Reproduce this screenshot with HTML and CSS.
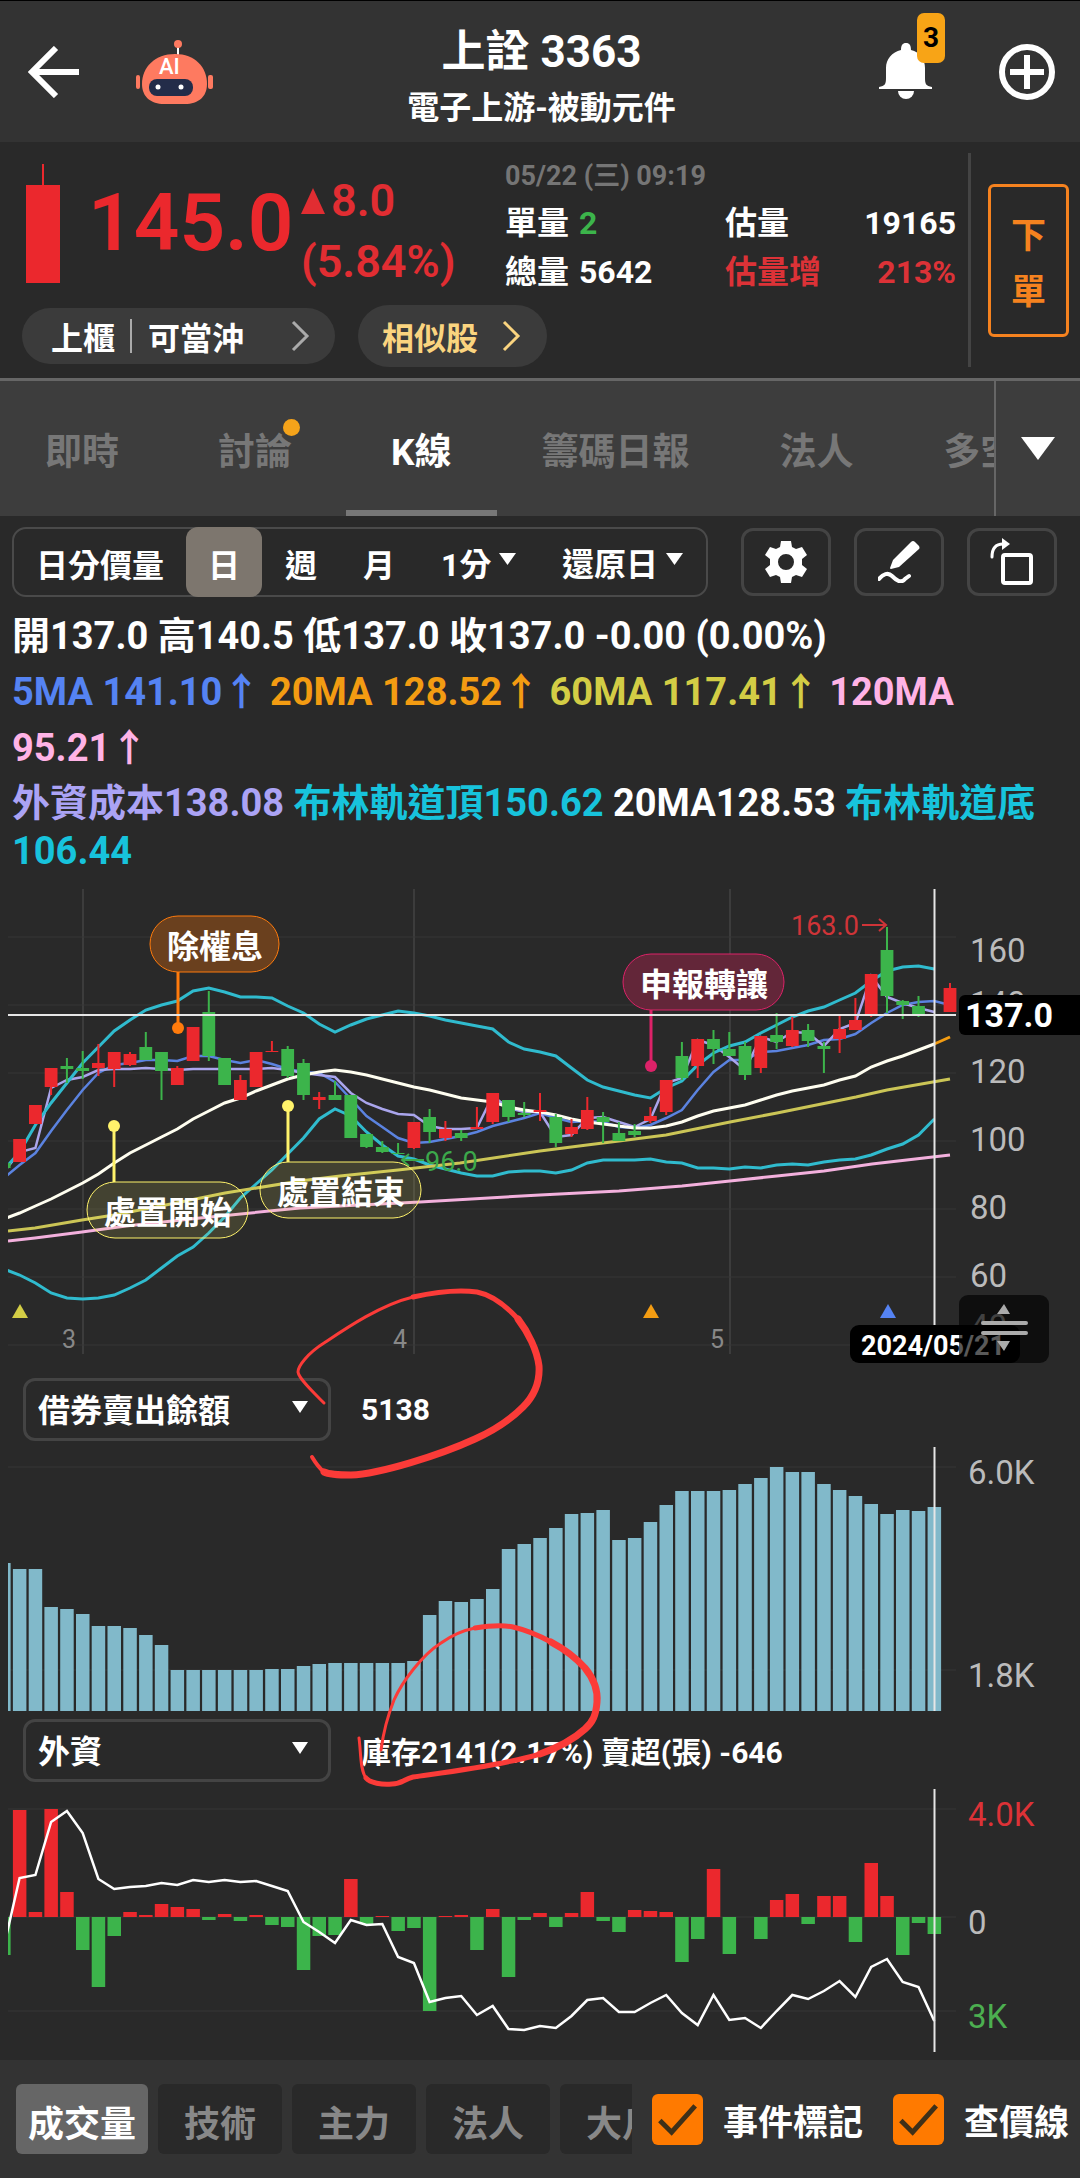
FILE: index.html
```html
<!DOCTYPE html>
<html lang="zh-Hant">
<head>
    <meta charset="utf-8">
    <title>上詮 3363</title>
    <meta name="viewport" content="width=device-width, initial-scale=1.0">
    <link rel="stylesheet" href="styles.css">
</head>
<body>
    <header class="topbar">
        <div class="topbar-left">
            <button class="icon-btn" aria-label="返回">
                <svg width="52" height="52" viewBox="0 0 52 52"><path d="M28 2 4 26l24 24M4 26h47" fill="none" stroke="#fff" stroke-width="6"/></svg>
            </button>
            <button class="icon-btn" aria-label="AI">
                <svg width="78" height="64" viewBox="0 0 78 64">
                    <path d="M42 6v10" stroke="#fff" stroke-width="2"/>
                    <circle cx="42" cy="4" r="4" fill="#fe7a60"/>
                    <rect x="0" y="35" width="4" height="14" rx="2" fill="#fe7a60"/>
                    <rect x="72" y="35" width="5" height="14" rx="2" fill="#fe7a60"/>
                    <path d="M39 14c20 0 32 13 32 30 0 13-9 20-22 20H28C15 64 6 57 6 44 6 27 19 14 39 14z" fill="#fe7a60"/>
                    <rect x="13" y="39" width="44" height="17" rx="8" fill="#232c49"/>
                    <circle cx="22" cy="47" r="2.5" fill="#fff"/>
                    <circle cx="45" cy="47" r="2.5" fill="#fff"/>
                    <text class="robot-text" x="23" y="34">AI</text>
                </svg>
            </button>
        </div>
        <div class="topbar-title">
            <h1>上詮 3363</h1>
            <p>電子上游-被動元件</p>
        </div>
        <div class="topbar-right">
            <button class="icon-btn bell" aria-label="通知">
                <svg width="54" height="58" viewBox="0 0 54 58">
                    <path d="M27 0c3.500 0 5 2.500 5 7 9 2 14 9 14 18v10c0 6 1 8 7 9v2H0v-2c6-1 7-3 7-9V25C7 16 13 9 22 7c0-4.500 1.500-7 5-7z" fill="#fff"/>
                    <path d="M19 48h16a8 8 0 0 1-16 0z" fill="#fff"/>
                </svg>
                <span class="badge">3</span>
            </button>
            <button class="icon-btn" aria-label="加入">
                <svg width="56" height="56" viewBox="0 0 56 56"><circle cx="28" cy="28" r="25" fill="none" stroke="#fff" stroke-width="6"/><path d="M28 11v34M11 28h34" stroke="#fff" stroke-width="6"/></svg>
            </button>
        </div>
    </header>

    <section class="quote">
        <div class="quote-main">
            <div class="quote-row">
                <svg class="quote-candle" width="34" height="120" viewBox="0 0 34 120"><path d="M17 0v22" stroke="#eb282d" stroke-width="2"/><path d="M0 21h34v98H0z" fill="#eb282d"/></svg>
                <div class="price">145.0</div>
                <div class="change">
                    <div><svg width="24" height="26" viewBox="0 0 24 26"><path d="M12 0l12 26H0z" fill="#e12d32"/></svg>8.0</div>
                    <div>(5.84%)</div>
                </div>
                <div class="stats">
                    <time>05/22 (三) 09:19</time>
                    <span>單量</span><span class="green">2</span><span>估量</span><span class="num">19165</span>
                    <span>總量</span><span>5642</span><span class="red">估量增</span><span class="num red">213%</span>
                </div>
            </div>
            <div class="chips">
                <button class="chip chip-market"><span>上櫃</span><i></i><span>可當沖</span><svg width="20" height="32" viewBox="0 0 20 32"><path d="M3 2l14 14L3 30" fill="none" stroke="#aaa" stroke-width="3"/></svg></button>
                <button class="chip chip-similar"><span>相似股</span><svg width="20" height="32" viewBox="0 0 20 32"><path d="M3 2l14 14L3 30" fill="none" stroke="#fad47f" stroke-width="3"/></svg></button>
            </div>
        </div>
        <div class="quote-order">
            <button class="order"><span>下</span><span>單</span></button>
        </div>
    </section>

    <nav class="tabs">
        <div class="tabs-list">
            <a href="#">即時</a>
            <a href="#" class="has-dot"><span>討論</span></a>
            <a href="#" class="active">K線</a>
            <a href="#">籌碼日報</a>
            <a href="#">法人</a>
            <a href="#">多空</a>
        </div>
        <button class="tabs-more" aria-label="更多"><svg width="34" height="23" viewBox="0 0 34 23"><path d="M0 0h34L17 23z" fill="#fff"/></svg></button>
    </nav>

    <div class="toolbar">
        <div class="periods">
            <button>日分價量</button>
            <button class="active">日</button>
            <button>週</button>
            <button>月</button>
            <label class="pick"><select aria-label="分鐘"><option>1分</option></select><svg width="17" height="12" viewBox="0 0 17 12"><path d="M0 0h17L8.500 12z" fill="#fff"/></svg></label>
            <label class="pick"><select aria-label="還原"><option>還原日</option></select><svg width="17" height="12" viewBox="0 0 17 12"><path d="M0 0h17L8.500 12z" fill="#fff"/></svg></label>
        </div>
        <div class="tools">
            <button aria-label="設定">
                <svg width="42" height="42" viewBox="0 0 42 42"><path fill="#fff" fill-rule="evenodd" d="M16 0h10l1 6 4 2 6-2 5 8-5 4v6l5 4-5 8-6-2-4 2-1 6H16l-1-6-4-2-6 2-5-8 5-4v-6l-5-4 5-8 6 2 4-2zM21 13a8 8 0 1 0 0 16 8 8 0 0 0 0-16z"/></svg>
            </button>
            <button aria-label="畫線">
                <svg width="42" height="42" viewBox="0 0 42 42"><path d="M33 1q2-2 4 0l4 4q1 2 0 3L21 26l-8 2q-1 0-1-1l3-8z" fill="#fff"/><path d="M1 38c4-5 9-7 13-3s9 8 13 3l4-3" fill="none" stroke="#fff" stroke-width="4" stroke-linecap="round"/></svg>
            </button>
            <button aria-label="旋轉">
                <svg width="44" height="48" viewBox="0 0 44 48"><rect x="13" y="17" width="28" height="28" rx="2" fill="none" stroke="#fff" stroke-width="4"/><path d="M2 19C2 10 6 6 13 6" fill="none" stroke="#fff" stroke-width="3" stroke-linecap="round"/><path d="M12 0l8 6-8 6z" fill="#fff"/></svg>
            </button>
        </div>
    </div>

    <section class="info">
        <p>開137.0 高140.5 低137.0 收137.0 -0.00 (0.00%)</p>
        <p><span class="ma5">5MA 141.10↑</span> <span class="ma20">20MA 128.52↑</span> <span class="ma60">60MA 117.41↑</span> <span class="ma120">120MA 95.21↑</span></p>
        <p class="bands"><span class="cost">外資成本138.08</span> <span class="band">布林軌道頂150.62</span> 20MA128.53 <span class="band">布林軌道底106.44</span></p>
    </section>

    <section class="charts">
        <svg class="chart" viewBox="0 5 1080 499">
            <clipPath id="plot"><rect x="8" y="0" width="949" height="504"/></clipPath>
            <path class="grid-v" d="M83 19v465M414 19v465M730 19v465"/>
            <path class="grid" d="M8 67h948M8 135h948M8 203h948M8 271h948M8 339h948M8 407h948M8 475h948"/>
            <g class="axis">
                <text x="970" y="92">160</text>
                <text x="970" y="145">140</text>
                <text x="970" y="213">120</text>
                <text x="970" y="281">100</text>
                <text x="970" y="349">80</text>
                <text x="970" y="417">60</text>
                <text x="970" y="468">40</text>
            </g>
            <g id="price" clip-path="url(#plot)"></g>
            <g class="months">
                <text x="62" y="478">3</text>
                <text x="393" y="478">4</text>
                <text x="710" y="478">5</text>
            </g>
            <path d="M12 448l8-14 8 14z" fill="#d3cd45"/>
            <path d="M643 448l8-14 8 14z" fill="#f39c12"/>
            <path d="M880 448l8-14 8 14z" fill="#5583f3"/>
            <text class="extreme" x="791" y="65" fill="#cf3438">163.0</text>
            <path d="M862 55h23M879 49l7 6-7 6" fill="none" stroke="#cf3438" stroke-width="2"/>
            <text class="extreme" x="425" y="301" fill="#3ca84b">96.0</text>
            <path d="M424 290h-22M409 284l-7 6 7 6" fill="none" stroke="#3ca84b" stroke-width="2"/>

            <g class="event ex">
                <path d="M178 102v55"/><circle cx="178" cy="158" r="6"/>
                <rect x="150" y="46" width="129" height="56" rx="28"/>
                <text x="167" y="88">除權息</text>
            </g>
            <g class="event hold">
                <path d="M114 256v56"/><circle cx="114" cy="256" r="6"/>
                <rect x="87" y="312" width="161" height="56" rx="28"/>
                <text x="104" y="354">處置開始</text>
            </g>
            <g class="event hold">
                <path d="M288 236v56"/><circle cx="288" cy="236" r="6"/>
                <rect x="260" y="292" width="161" height="56" rx="28"/>
                <text x="277" y="334">處置結束</text>
            </g>
            <g class="event transfer">
                <path d="M651 140v56"/><circle cx="651" cy="196" r="6"/>
                <rect x="623" y="84" width="161" height="56" rx="28"/>
                <text x="640" y="126">申報轉讓</text>
            </g>

            <path class="cross" d="M934.500 19v437M8 145h948"/>
            <rect x="959" y="125" width="130" height="40" rx="6"/>
            <text class="tag" x="965" y="157">137.0</text>
            <rect x="850" y="455" width="170" height="38" rx="9"/>
            <text class="tag tag-date" x="861" y="485">2024/05/21</text>
            <rect x="959" y="425" width="90" height="68" rx="9" fill-opacity=".65"/>
            <path d="M997 444l7-10 6 10zM997 471h13l-6 10z" fill="#aaa"/>
            <path d="M983 453h43M983 463h43" stroke="#aaa" stroke-width="4" stroke-linecap="round"/>
        </svg>

        <div class="sub-head">
            <label class="indicator"><select aria-label="指標"><option>借券賣出餘額</option></select><svg width="16" height="12" viewBox="0 0 16 12"><path d="M0 0h16L8 12z" fill="#fff"/></svg></label>
            <span>5138</span>
        </div>
        <svg class="chart" viewBox="0 4 1080 271">
            <path class="grid" d="M8 27h948M8 230h948"/>
            <g id="lending" clip-path="url(#plot)"></g>
            <path class="cross" d="M934.500 7v264"/>
            <g class="axis">
                <text x="968" y="44">6.0K</text>
                <text x="968" y="247">1.8K</text>
            </g>
        </svg>

        <div class="sub-head">
            <label class="indicator"><select aria-label="法人"><option>外資</option></select><svg width="16" height="12" viewBox="0 0 16 12"><path d="M0 0h16L8 12z" fill="#fff"/></svg></label>
            <span>庫存2141(2.17%) 賣超(張) -646</span>
        </div>
        <svg class="chart" viewBox="0 4 1080 275">
            <path class="grid" d="M8 28h948M8 136h948M8 230h948"/>
            <g id="foreign" clip-path="url(#plot)"></g>
            <path class="cross" d="M934.500 8v263"/>
            <g class="axis">
                <text class="up" x="968" y="45">4.0K</text>
                <text x="968" y="153">0</text>
                <text class="down" x="968" y="247">3K</text>
            </g>
        </svg>

        <!-- hand drawn marks over the charts -->
        <svg class="marks" viewBox="0 875 1080 1185">
            <path stroke-width="3" d="M324 1403C314 1393 299 1379 298 1372C298 1366 308 1353 324 1343C345 1329 380 1305 413 1297"/>
            <path stroke-width="5" d="M413 1297C440 1291 462 1290 477 1292C492 1295 507 1307 518 1319"/>
            <path stroke-width="7" d="M518 1319C528 1332 537 1350 539 1366C540 1382 534 1396 523 1407C512 1418 495 1430 475 1439C440 1455 380 1474 351 1475C342 1475 328 1474 324 1472"/>
            <path stroke-width="4" d="M324 1472C318 1467 315 1462 312 1457"/>
            <path stroke-width="3" d="M381 1750C383 1735 388 1715 394 1700C402 1682 422 1655 441 1643C455 1633 465 1630 475 1628"/>
            <path stroke-width="5" d="M475 1628C488 1626 503 1625 513 1627C526 1630 540 1636 551 1642"/>
            <path stroke-width="7" d="M551 1642C566 1650 577 1659 585 1668C594 1679 598 1690 597 1702C596 1715 593 1722 585 1729C574 1739 560 1747 540 1754"/>
            <path stroke-width="5" d="M540 1754C500 1766 440 1773 413 1777C404 1779 402 1784 392 1784C382 1785 370 1783 366 1778"/>
            <path stroke-width="3" d="M366 1778C360 1770 361 1752 359 1738"/>
        </svg>
    </section>

    <footer class="bottom">
        <div class="groups">
            <button class="active">成交量</button>
            <button>技術</button>
            <button>主力</button>
            <button>法人</button>
            <button>大戶</button>
        </div>
        <label class="check"><input type="checkbox" checked><svg viewBox="0 0 52 52"><path d="M8 27l12 12 24-27" fill="none" stroke="#3f3018" stroke-width="5"/></svg>事件標記</label>
        <label class="check"><input type="checkbox" checked><svg viewBox="0 0 52 52"><path d="M8 27l12 12 24-27" fill="none" stroke="#3f3018" stroke-width="5"/></svg>查價線</label>
    </footer>

    <script src="charts.js"></script>
</body>
</html>
```
FILE: styles.css
```css
body {
    margin: 0;
    background-color: #292929;
    color: #fff;
    font-family: Roboto, "Noto Sans CJK TC", sans-serif;
    font-weight: 700;
}
h1, p {
    margin: 0;
    font-weight: 700;
}
button, select {
    margin: 0;
    padding: 0;
    border: none;
    background: none;
    color: inherit;
    font: inherit;
    cursor: pointer;
}
select {
    appearance: none;
    outline: none;
    padding-top: 4px;
}
svg {
    display: block;
    flex: none;
}
a {
    color: inherit;
    text-decoration: none;
}
.red {
    color: #dc3237;
}
.green {
    color: #3cb44b;
}

/* top bar */
.topbar {
    display: grid;
    grid-template-columns: 1fr auto 1fr;
    box-sizing: border-box;
    height: 142px;
    padding: 0 25px 0 28px;
    border-top: 1px solid #000;
    background-color: #333;
}
.topbar-left, .topbar-right {
    display: flex;
    align-items: center;
}
.topbar-left {
    gap: 56px;
}
.topbar-right {
    justify-content: flex-end;
    gap: 66px;
}
.topbar-title {
    padding-top: 24px;
    text-align: center;
}
.topbar-title h1 {
    font-size: 44px;
    line-height: 54px;
}
.topbar-title p {
    font-size: 32px;
    line-height: 58px;
}
.robot-text {
    font-size: 22px;
    font-weight: 500;
    fill: #fff;
}
.bell {
    position: relative;
}
.badge {
    position: absolute;
    left: 38px;
    bottom: 38px;
    width: 28px;
    border-radius: 7px;
    background-color: #f8a416;
    color: #000;
    font-size: 28px;
    line-height: 50px;
}

/* quote */
.quote {
    display: flex;
    padding: 11px 11px 11px 22px;
    border-bottom: 3px solid #666;
}
.quote-main {
    flex: 1;
    padding-right: 12px;
}
.quote-row {
    display: grid;
    grid-template-columns: 62px 213px 204px 1fr;
    padding-left: 4px;
    height: 152px;
}
.quote-candle {
    margin-top: 11px;
}
.price {
    padding-top: 22px;
    color: #eb282d;
    font-size: 80px;
    font-weight: 600;
    line-height: 96px;
}
.change {
    padding-top: 17px;
    color: #e12d32;
    font-size: 45px;
    font-weight: 600;
    line-height: 61px;
}
.change div {
    display: flex;
    align-items: center;
    gap: 6px;
}
.stats {
    display: grid;
    grid-template-columns: 64px 136px 96px 1fr;
    column-gap: 10px;
    align-content: start;
    font-size: 32px;
    line-height: 49px;
}
.stats time {
    grid-column: 1 / -1;
    color: #757575;
    font-size: 27px;
    line-height: 46px;
}
.num {
    text-align: right;
}
.chips {
    display: flex;
    align-items: center;
    gap: 23px;
}
.chip {
    display: flex;
    align-items: center;
    border-radius: 31px;
    background-color: #3b3b3b;
    font-size: 32px;
}
.chip-market {
    height: 56px;
    padding: 0 25px 0 29px;
}
.chip-market i {
    width: 2px;
    height: 34px;
    margin: 0 16px 0 15px;
    background-color: #aaa;
}
.chip-market svg {
    margin-left: 46px;
}
.chip-similar {
    height: 62px;
    gap: 23px;
    padding: 0 26px 0 24px;
    color: #fad47f;
}
.quote-order {
    display: flex;
    align-items: center;
    padding-left: 17px;
    border-left: 3px solid #444;
}
.order {
    display: flex;
    flex-direction: column;
    justify-content: center;
    align-items: center;
    box-sizing: border-box;
    width: 81px;
    height: 153px;
    padding-top: 10px;
    border: 3px solid #f5821f;
    border-radius: 6px;
    color: #f5821f;
    font-size: 35px;
    line-height: 56px;
}

/* tabs */
.tabs {
    display: flex;
    height: 135px;
    background-color: #3d3d3d;
    color: #777;
    font-size: 37px;
}
.tabs-list {
    display: flex;
    flex: 1;
    min-width: 0;
    overflow: hidden;
    white-space: nowrap;
}
.tabs-list a {
    flex: none;
    box-sizing: border-box;
    height: 135px;
    padding: 0 45px;
    border-bottom: 6px solid transparent;
    line-height: 144px;
}
.tabs-list .active {
    border-color: #777;
    color: #fff;
}
.tabs-list .has-dot {
    padding: 0 54px;
}
.has-dot span {
    position: relative;
}
.has-dot span::after {
    content: "";
    position: absolute;
    top: -12px;
    right: -8px;
    width: 17px;
    height: 17px;
    border-radius: 50%;
    background-color: #f5a31a;
}
.tabs-more {
    display: flex;
    justify-content: center;
    align-items: center;
    width: 86px;
    border-left: 2px solid #666;
}

/* period toolbar */
.toolbar {
    display: flex;
    align-items: center;
    justify-content: space-between;
    padding: 11px 23px 11px 12px;
    font-size: 32px;
}
.periods {
    display: flex;
    box-sizing: border-box;
    height: 70px;
    border: 2px solid #4a4a4a;
    border-radius: 14px;
}
.periods button {
    padding: 2px 22px 0;
}
.periods .active {
    margin: -2px 0;
    border-radius: 12px;
    background-color: #7d766e;
}
.periods .active ~ button, .pick {
    padding: 2px 23px 0;
}
.pick {
    display: flex;
    align-items: center;
    gap: 7px;
}
.pick svg {
    margin-bottom: 8px;
}
.tools {
    display: flex;
    gap: 23px;
}
.tools button {
    display: flex;
    justify-content: center;
    align-items: center;
    box-sizing: border-box;
    width: 90px;
    height: 68px;
    border: 3px solid #444;
    border-radius: 12px;
}

/* values under the cursor */
.info {
    padding: 0 12px;
    font-size: 38px;
    line-height: 56px;
}
.info .bands {
    padding-top: 3px;
    line-height: 48px;
}
.ma5 {
    color: #5583f3;
}
.ma20 {
    color: #f39c12;
}
.ma60 {
    color: #d3cd45;
}
.ma120 {
    color: #ffb3e6;
}
.cost {
    color: #aba3f5;
}
.band {
    color: #17c3dc;
}

/* charts */
.charts {
    position: relative;
}
.chart {
    width: 100%;
}
.marks {
    position: absolute;
    top: 0;
    left: 0;
    width: 100%;
    fill: none;
    stroke: #fb3b38;
    stroke-linecap: round;
    pointer-events: none;
}
.grid, .grid-v {
    stroke: #363636;
    stroke-width: 1;
}
.grid-v {
    stroke: #3c3c3c;
    stroke-width: 2;
}
.cross {
    stroke: #e6e6e6;
    stroke-width: 2;
}
.axis {
    fill: #bbb;
    font-size: 33px;
    font-weight: 400;
}
.axis .up {
    fill: #dc3237;
}
.axis .down {
    fill: #4caf50;
}
.months {
    fill: #888;
    font-size: 25px;
    font-weight: 400;
}
.extreme {
    font-size: 27px;
    font-weight: 400;
}
.tag {
    fill: #fff;
    font-size: 34px;
}
.tag-date {
    font-size: 27px;
}
.event path {
    stroke-width: 3;
}
.event text {
    fill: #fff;
    font-size: 32px;
}
.ex path, .ex rect {
    stroke: #ff7b0c;
}
.ex circle {
    fill: #ff7b0c;
}
.ex rect {
    fill: #6a401e;
}
.hold path, .hold rect {
    stroke: #fff36b;
}
.hold circle {
    fill: #fff36b;
}
.hold rect {
    fill: #fff36b;
    fill-opacity: .12;
}
.transfer path, .transfer rect {
    stroke: #dc2268;
}
.transfer circle {
    fill: #dc2268;
}
.transfer rect {
    fill: #632639;
}
.sub-head {
    display: flex;
    align-items: center;
    gap: 30px;
    height: 70px;
    padding-left: 23px;
    font-size: 30px;
}
.indicator {
    display: flex;
    align-items: center;
    justify-content: space-between;
    box-sizing: border-box;
    width: 308px;
    height: 63px;
    padding: 0 20px 0 12px;
    border: 3px solid #444;
    border-radius: 12px;
    font-size: 32px;
}
.indicator svg {
    margin-bottom: 4px;
}

/* bottom bar */
.bottom {
    display: flex;
    align-items: center;
    height: 118px;
    padding: 0 11px 0 16px;
    background-color: #333;
}
.groups {
    display: flex;
    flex: 1;
    gap: 10px;
    min-width: 0;
    overflow: hidden;
    color: #888;
    font-size: 36px;
}
.groups button {
    flex: none;
    height: 70px;
    padding: 3px 26px 0;
    border-radius: 6px;
    background-color: #292929;
}
.groups .active {
    padding: 3px 12px 0;
    background-color: #666;
    color: #fff;
}
.check {
    display: grid;
    grid-template-columns: 51px auto;
    column-gap: 20px;
    align-items: center;
    margin-left: 20px;
    font-size: 35px;
}
.check + .check {
    margin-left: 30px;
}
.check input, .check svg {
    grid-area: 1 / 1;
    width: 51px;
    height: 51px;
    margin: 0;
}
.check input {
    appearance: none;
    border-radius: 6px;
    background-color: #ff7a00;
}
.check input:not(:checked) + svg {
    visibility: hidden;
}
```
FILE: charts.js
```javascript
var STEP = 15.77;
var FIRST = 19.6;
var RED = "#eb282d";
var GREEN = "#3cb44b";

function xAt(i) {
    return +(FIRST + i * STEP).toFixed(1);
}

function add(parent, tag, attrs) {
    var el = document.createElementNS("http://www.w3.org/2000/svg", tag);
    for (var key in attrs) {
        el.setAttribute(key, attrs[key]);
    }
    parent.appendChild(el);
}

// points are listed from start on, one for each day
function line(parent, points, start, color, width) {
    var coords = points.map(function (y, i) { return xAt(i + start) + "," + y; });
    add(parent, "polyline", { points: coords.join(" "), fill: "none", stroke: color, "stroke-width": width });
}

function bar(parent, i, top, height, color) {
    add(parent, "rect", { x: (xAt(i) - 6.7).toFixed(1), y: top, width: 13.5, height: height, fill: color });
}

var price = document.getElementById("price");

var upper = [300,282,255,233,213,193,177,161,150,140,135,131,121,118,122,127,127,128,136,143,154,162,155,149,145,141,143,146,150,153,156,159,172,179,182,186,198,210,217,221,225,228,218,211,195,183,176,172,163,155,147,141,137,130,123,111,101,97,96,99];
var lower = [399,405,413,423,428,429,428,425,418,410,398,386,377,363,347,328,314,300,284,268,249,239,246,262,275,286,289,295,299,303,306,306,302,301,301,303,300,293,290,290,290,289,292,293,298,298,299,297,298,295,294,295,292,290,289,285,279,274,265,249];
var ma20 = [349,343,336,329,321,313,304,293,283,275,267,259,249,241,233,228,221,215,209,205,202,200,202,205,209,213,217,220,224,228,230,232,237,240,242,245,249,252,254,256,258,258,256,252,246,241,238,235,230,225,221,218,215,210,206,197,191,186,180,174];
var ma5 = [308,295,283,261,240,220,203,195,193,190,190,191,186,186,190,193,190,194,199,202,203,212,229,246,257,268,273,272,269,266,262,256,252,248,243,248,252,251,252,257,258,255,248,240,220,202,190,190,182,181,178,175,170,169,164,153,143,135,132,131,135];
var cost = [302,282,278,218,210,207,200,199,199,198,199,200,199,199,199,199,199,198,200,203,205,207,223,233,239,244,245,256,259,259,258,226,238,242,242,267,265,248,247,252,257,249,213,208,170,175,187,200,167,172,162,163,176,159,153,106,127,133,138,142];

line(price, lower, -1, "#30bbce", 3);
add(price, "polyline", { points: "8,371 35,368 82,362 126,356 200,348 300,338 420,332 540,325 579,323 619,321 682,316 730,311 777,306 824,301 872,294 950,285", fill: "none", stroke: "#f3b0dd", "stroke-width": 3 });
add(price, "polyline", { points: "8,361 35,358 82,350 114,345 176,333 225,323 300,311 340,306 398,300 460,293 540,281 587,275 619,271 666,265 730,252 777,243 856,227 887,220 950,209", fill: "none", stroke: "#cbc556", "stroke-width": 3 });
line(price, ma5, -1, "#5b83e0", 2.5);
line(price, cost, -1, "#aaa5ec", 2.5);
line(price, upper, -1, "#30bbce", 3);
line(price, [174, 167], 58, "#f39c12", 3);
line(price, ma20, -1, "#fffef0", 3);

// color, high, body top, body bottom, low
var candles = [
    "R 269 269 292 292", "R 235 235 254 254", "R 198 198 217 225", "G 188 196 199 213", "G 181 198 201 209",
    "R 174 193 198 206", "R 182 182 199 217", "R 182 184 195 196", "G 162 177 190 190", "G 182 182 201 230",
    "R 196 198 215 215", "R 157 157 191 191", "G 121 142 186 191", "G 188 188 215 215", "R 205 210 230 230",
    "R 182 182 217 217", "R 171 181 182 182", "G 176 179 206 208", "G 189 193 225 230", "R 222 227 230 239",
    "G 211 225 230 230", "G 225 225 268 268", "G 264 264 277 278", "G 271 277 282 283", "G 273 283 284 284",
    "R 252 252 278 279", "G 239 247 262 273", "R 251 259 268 271", "G 260 263 268 271", "R 237 257 259 259",
    "R 223 223 252 254", "G 230 230 247 252", "G 232 243 245 247", "R 223 240 242 251", "G 244 247 273 277",
    "R 249 257 264 267", "R 227 240 259 260", "G 242 247 252 273", "G 252 263 271 271", "G 254 261 265 267",
    "R 237 246 251 253", "R 210 210 242 245", "G 172 186 208 210", "R 169 169 196 208", "G 160 169 179 194",
    "G 162 179 186 186", "G 172 176 205 210", "R 166 166 198 203", "G 143 165 172 179", "R 147 160 176 177",
    "G 154 160 171 177", "G 172 176 179 203", "R 146 159 169 183", "R 128 150 160 160", "R 104 104 145 147",
    "G 57 80 126 143", "G 130 131 135 149", "G 126 136 145 147", "W 144 144 146 146", "R 113 118 142 142"
];
bar(price, -1, 293, 5, GREEN);
for (var i = 0; i < candles.length; i++) {
    var c = candles[i].split(" ");
    var color = { R: RED, G: GREEN, W: "#fff" }[c[0]];
    add(price, "rect", { x: xAt(i) - 1, y: c[1], width: 2, height: c[4] - c[1], fill: color });
    add(price, "rect", { x: (xAt(i) - 6.4).toFixed(1), y: c[2], width: 12.8, height: c[3] - c[2], fill: color });
}

var lending = document.getElementById("lending");
var tops = [123,129,129,167,169,174,186,186,188,195,205,230,230,230,230,230,230,229,229,226,224,223,223,223,223,223,221,175,161,162,159,149,109,104,98,88,74,73,70,100,98,82,65,51,51,51,50,44,38,27,32,32,44,50,56,64,74,70,71,67];
tops.forEach(function (top, n) {
    bar(lending, n - 1, top, 271 - top, "#81b9ca");
});

var foreign = document.getElementById("foreign");
var net = [-38,107,5,108,25,-33,-70,-19,5,2,13,10,8,-3,3,-4,2,-8,-10,-53,-19,-18,38,-7,1,-14,-11,-94,1,2,-33,8,-60,-3,4,-10,4,25,-4,-15,7,6,5,-45,-22,48,-37,0,-22,17,23,-7,21,21,-25,54,21,-38,-6,-17];
net.forEach(function (value, n) {
    bar(foreign, n - 1, value > 0 ? 136 - value : 136, Math.abs(value), value > 0 ? RED : GREEN);
});
line(foreign, [166,97,94,41,30,52,98,108,106,105,102,104,99,101,99,101,100,105,110,141,151,162,139,144,143,176,182,221,217,215,234,225,248,249,245,247,235,219,217,231,231,222,214,232,244,214,239,237,247,230,214,218,210,200,216,186,178,201,206,240], -1, "#fff", 2.5);
```
